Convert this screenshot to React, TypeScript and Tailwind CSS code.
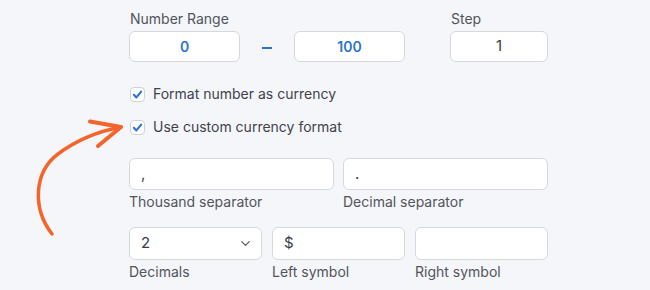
import { ChevronDown } from "lucide-react";

function Check() {
  return (
    <span className="w-[15px] h-[15px] rounded-[4px] border border-[#cfd2d8] bg-white flex items-center justify-center">
      <svg width="11" height="11" viewBox="0 0 12 12" fill="none">
        <path d="M2 6.4 L4.8 9.2 L10 2.8" stroke="#2b74d0" strokeWidth="2.3" strokeLinecap="round" strokeLinejoin="round" />
      </svg>
    </span>
  );
}

function Field({
  value,
  label,
  width,
  height,
  extra,
}: {
  value: string;
  label: string;
  width: string;
  height: string;
  extra?: React.ReactNode;
}) {
  return (
    <div className={`flex flex-col ${width}`}>
      <div className={`${height} rounded-[6px] border border-[#d6d8dd] bg-white flex items-center justify-between pl-[11px] pr-[8px] text-[15px] text-[#3a3d44]`}>
        <span>{value}</span>
        {extra}
      </div>
      <span className="mt-[2px] text-[14px] leading-[20px] text-[#51545c]">{label}</span>
    </div>
  );
}

export default function App() {
  return (
    <div
      className="relative w-[650px] h-[290px] bg-[#f5f6fa] overflow-hidden pl-[129px] pt-[9px]"
      style={{ fontFamily: "Inter, 'Noto Sans', sans-serif" }}
    >
      {/* range + step */}
      <div className="flex items-start">
        <div className="flex flex-col">
          <span className="text-[14px] leading-[20px] text-[#51545c] pl-[1px]">Number Range</span>
          <div className="mt-[2px] flex items-center">
            <div className="w-[111px] h-[31px] rounded-[6px] border border-[#d6d8dd] bg-white flex items-center justify-center text-[14px] font-semibold text-[#2b74d0]">
              0
            </div>
            <div className="w-[54px] flex justify-center">
              <span className="w-[10px] h-[2px] bg-[#2b74d0] mt-[3px]" />
            </div>
            <div className="w-[111px] h-[31px] rounded-[6px] border border-[#d6d8dd] bg-white flex items-center justify-center text-[14px] font-semibold text-[#2b74d0]">
              100
            </div>
          </div>
        </div>
        <div className="ml-[45px] flex flex-col">
          <span className="text-[14px] leading-[20px] text-[#51545c] pl-[1px]">Step</span>
          <div className="mt-[2px] w-[98px] h-[31px] rounded-[6px] border border-[#d6d8dd] bg-white flex items-center justify-center text-[15px] text-[#3a3d44]">
            1
          </div>
        </div>
      </div>

      {/* checkboxes */}
      <div className="mt-[22px] flex flex-col gap-[13px] pl-[1px]">
        <label className="flex items-center gap-[8px] text-[14px] leading-[20px] text-[#3f424a]">
          <Check />
          Format number as currency
        </label>
        <label className="flex items-center gap-[8px] text-[14px] leading-[20px] text-[#3f424a]">
          <Check />
          Use custom currency format
        </label>
      </div>

      {/* separators */}
      <div className="mt-[21px] flex gap-[9px]">
        <Field value="," label="Thousand separator" width="w-[205px]" height="h-[32px]" />
        <Field value="." label="Decimal separator" width="w-[205px]" height="h-[32px]" />
      </div>

      {/* decimals + symbols */}
      <div className="mt-[15px] flex gap-[10px]">
        <Field
          value="2"
          label="Decimals"
          width="w-[133px]"
          height="h-[33px]"
          extra={<ChevronDown size={15} strokeWidth={1.75} className="text-[#4d5058]" />}
        />
        <Field value="$" label="Left symbol" width="w-[133px]" height="h-[33px]" />
        <Field value="" label="Right symbol" width="w-[133px]" height="h-[33px]" />
      </div>

      {/* hand-drawn arrow */}
      <svg className="absolute left-0 top-0" width="650" height="290" viewBox="0 0 650 290" fill="none">
        <path
          d="M52 234 C 32 208, 34 172, 58 154 C 78 139, 100 131, 121 127"
          stroke="#f4652c"
          strokeWidth="3.5"
          strokeLinecap="round"
        />
        <path d="M90 121.5 L121 127 L98 146" stroke="#f4652c" strokeWidth="4" strokeLinecap="round" strokeLinejoin="round" />
      </svg>
    </div>
  );
}
